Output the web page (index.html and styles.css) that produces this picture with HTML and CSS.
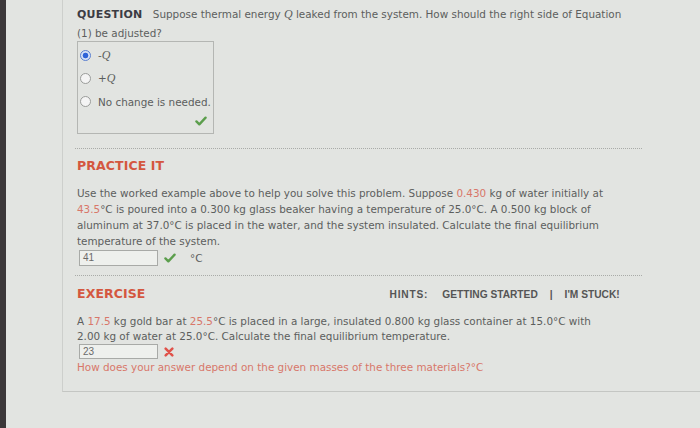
FILE: index.html
```html
<!DOCTYPE html>
<html>
<head>
<meta charset="utf-8">
<link rel="stylesheet" href="styles.css">
</head>
<body>
<div class="bezel"></div>
<div class="screen">
  <div class="panel">
    <section class="question">
      <p class="qtext"><b class="qlabel">QUESTION</b> Suppose thermal energy <i class="q">Q</i> leaked from the system. How should the right side of Equation<br>(1) be adjusted?</p>
      <div class="options">
        <div class="opt"><span class="radio on"></span><span>-<i class="q">Q</i></span></div>
        <div class="opt"><span class="radio"></span><span>+<i class="q">Q</i></span></div>
        <div class="opt"><span class="radio"></span><span>No change is needed.</span></div>
        <div class="optfoot">
          <svg class="check" viewBox="0 0 14 12" width="12" height="10"><path d="M1.5 6.5 L5 10 L12.5 2" fill="none" stroke="#5b9e4c" stroke-width="2.8" stroke-linecap="round" stroke-linejoin="round"/></svg>
        </div>
      </div>
    </section>
    <section class="block">
      <h2 class="head">PRACTICE IT</h2>
      <p class="para">Use the worked example above to help you solve this problem. Suppose <span class="val">0.430</span> kg of water initially at<br><span class="val">43.5</span>°C is poured into a 0.300 kg glass beaker having a temperature of 25.0°C. A 0.500 kg block of<br>aluminum at 37.0°C is placed in the water, and the system insulated. Calculate the final equilibrium<br>temperature of the system.</p>
      <div class="answer">
        <span class="input">41</span>
        <svg class="check" viewBox="0 0 14 12" width="12" height="10"><path d="M1.5 6.5 L5 10 L12.5 2" fill="none" stroke="#5b9e4c" stroke-width="2.8" stroke-linecap="round" stroke-linejoin="round"/></svg>
        <span class="unit">°C</span>
      </div>
    </section>
    <section class="block ex">
      <div class="exhead">
        <h2 class="head">EXERCISE</h2>
        <div class="hints"><span class="hl">HINTS:</span><span>GETTING STARTED</span><span class="sep">|</span><span>I'M STUCK!</span></div>
      </div>
      <p class="para">A <span class="val">17.5</span> kg gold bar at <span class="val">25.5</span>°C is placed in a large, insulated 0.800 kg glass container at 15.0°C with<br>2.00 kg of water at 25.0°C. Calculate the final equilibrium temperature.</p>
      <div class="answer">
        <span class="input">23</span>
        <svg class="cross" viewBox="0 0 12 12" width="10" height="10"><path d="M2 2 L10 10 M10 2 L2 10" fill="none" stroke="#e0524a" stroke-width="3" stroke-linecap="round"/></svg>
      </div>
      <p class="feedback">How does your answer depend on the given masses of the three materials?°C</p>
    </section>
  </div>
</div>
</body>
</html>
```
FILE: styles.css
```css
html, body {
  margin: 0;
  padding: 0;
}
body {
  width: 700px;
  height: 428px;
  overflow: hidden;
  display: flex;
  background: #e2e4e1;
  font-family: "DejaVu Sans", Verdana, sans-serif;
  font-size: 10.4px;
  color: #5c5e5d;
}
.bezel {
  width: 6px;
  flex: none;
  background: #3b3739;
}
.screen {
  flex: 1;
  padding-left: 56px;
}
.panel {
  height: 392px;
  box-sizing: border-box;
  border-left: 1px solid #cdcfcc;
  border-bottom: 1px solid #c4c6c3;
  padding: 5px 0 0 14px;
}
p { margin: 0; }
.qtext {
  line-height: 18px;
}
.qlabel {
  font-size: 11px;
  color: #3c3c44;
  letter-spacing: 0.2px;
  margin-right: 7px;
}
.q {
  font-family: "Liberation Serif", serif;
  font-size: 12px;
}
.options {
  margin-top: -1px;
  border: 1px solid #b4b6b3;
  padding: 5px 0 0 2px;
  box-sizing: border-box;
  width: 137px;
  height: 93px;
  display: flex;
  flex-direction: column;
  gap: 6px;
}
.opt {
  display: flex;
  align-items: center;
  gap: 7px;
  height: 17px;
}
.radio {
  width: 9px;
  height: 9px;
  border-radius: 50%;
  border: 1px solid #9a9c9a;
  background: #f4f4f4;
  flex: none;
}
.radio.on {
  border-color: #5a7fd0;
  background: radial-gradient(circle, #2f63d8 0 2.5px, #d8e2f6 3.2px);
}
.optfoot {
  display: flex;
  justify-content: flex-end;
  padding-right: 6px;
}
.block {
  margin-top: 14px;
  width: 565px;
  margin-left: -2px;
  padding-left: 2px;
  border-top: 1px dotted #a9aba8;
}
.head {
  margin: 0;
  font-size: 12.5px;
  font-weight: bold;
  color: #d4573f;
  letter-spacing: 0.1px;
}
.block > .head {
  margin-top: 9px;
}
.para {
  margin-top: 12px;
  line-height: 16px;
}
.val { color: #d8776a; }
.answer {
  display: flex;
  align-items: center;
  height: 16px;
  margin-top: 1px;
}
.input {
  width: 79px;
  height: 16px;
  box-sizing: border-box;
  margin-left: 2px;
  border: 1px solid #a8aaa7;
  background: #eef0ed;
  font-family: "Liberation Sans", Arial, sans-serif;
  font-size: 10px;
  line-height: 14px;
  padding-left: 3px;
  color: #6a6a6a;
}
.answer .check { margin-left: 6px; }
.answer .cross { margin-left: 6px; }
.unit { margin-left: 14px; }
.ex {
  margin-top: 9px;
}
.exhead {
  display: flex;
  align-items: baseline;
  margin-top: 10px;
}
.hints {
  margin-left: 244px;
  display: flex;
  gap: 12px;
  font-family: "Liberation Sans", Arial, sans-serif;
  font-weight: bold;
  font-size: 10.2px;
  color: #555;
}
.hints .hl { letter-spacing: 0.8px; margin-right: 2px; }
.ex .para { margin-top: 13px; line-height: 15px; }
.ex .answer { margin-top: 0; height: 15px; }
.ex .input { height: 15px; line-height: 13px; }
.feedback {
  color: #d8776a;
  line-height: 16px;
}
```
